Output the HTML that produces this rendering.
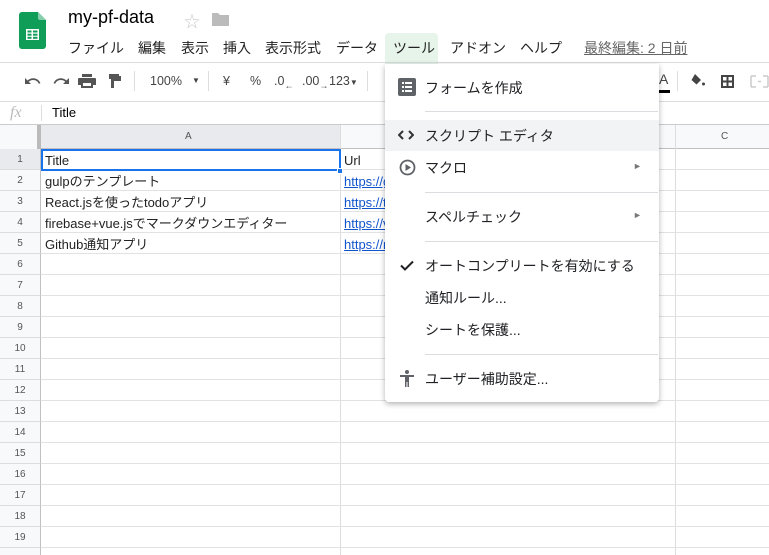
<!DOCTYPE html>
<html><head><meta charset="utf-8"><style>
*{margin:0;padding:0;box-sizing:border-box}
html,body{width:769px;height:555px;overflow:hidden}
body{background:#fff;font-family:"Liberation Sans","Noto Sans CJK JP",sans-serif;position:relative;color:#222}
.a{position:absolute}
.menu span{position:absolute;top:38px;font-size:14px;color:#222;white-space:nowrap}
.tb{position:absolute;font-size:12.5px;color:#444}
.rh{position:absolute;left:0;width:41px;height:21px;background:#f8f9fa;border-bottom:1px solid #ddd;border-right:1px solid #c0c0c0;font-size:10px;color:#555;text-align:center;line-height:21px}
.rl{position:absolute;left:41px;width:728px;height:1px;background:#e2e2e2}
.cell{position:absolute;font-size:13px;line-height:21px;white-space:nowrap;overflow:hidden}
.lnk{color:#1155cc;text-decoration:underline}
.mi{position:absolute;left:425px;font-size:14px;color:#202124;white-space:nowrap}
.sep{position:absolute;left:425px;width:233px;height:1px;background:#dadce0}
</style></head><body>
<svg class="a" style="left:19px;top:12px" width="27" height="37" viewBox="0 0 27 37"><path d="M3 0h16l8 8v26a3 3 0 0 1-3 3H3a3 3 0 0 1-3-3V3a3 3 0 0 1 3-3z" fill="#0f9d58"/><path d="M19 0l8 8h-6a2 2 0 0 1-2-2z" fill="#87ceac"/><rect x="7" y="17" width="13" height="11" fill="#fff"/><g fill="#0f9d58"><rect x="8.5" y="18.5" width="4" height="2"/><rect x="14" y="18.5" width="4.5" height="2"/><rect x="8.5" y="21.7" width="4" height="2"/><rect x="14" y="21.7" width="4.5" height="2"/><rect x="8.5" y="24.8" width="4" height="2"/><rect x="14" y="24.8" width="4.5" height="2"/></g></svg>
<div class="a" style="left:68px;top:7px;font-size:18px;color:#000">my-pf-data</div>
<div class="a" style="left:184px;top:8px;font-size:16px;color:#ccc">☆</div>
<svg class="a" style="left:212px;top:12px" width="17" height="14" viewBox="0 0 17 14"><path d="M0 1h6l2 2h9v11H0z" fill="#bbb"/></svg>
<div class="a" style="left:385px;top:33px;width:53px;height:31px;background:#e6f4ea;border-radius:4px 4px 0 0"></div>
<div class="menu">
<span style="left:68px">ファイル</span><span style="left:138px">編集</span><span style="left:181px">表示</span><span style="left:223px">挿入</span><span style="left:265px">表示形式</span><span style="left:336px">データ</span><span style="left:393px">ツール</span><span style="left:450px">アドオン</span><span style="left:520px">ヘルプ</span><span style="left:584px;color:#666;text-decoration:underline">最終編集: 2 日前</span>
</div>
<div class="a" style="left:0;top:62px;width:769px;height:1px;background:#dadce0"></div>
<svg class="a" style="left:23px;top:74px" width="105" height="14" viewBox="0 0 105 14" fill="#555"><path d="M2 4v6h6l-2.3-2.3C7 6.6 8.6 6 10.3 6c2.6 0 4.7 1.6 5.5 3.8l1.6-.5C16.4 6.4 13.6 4.3 10.3 4.3 8.1 4.3 6.1 5.1 4.6 6.5z"/><path d="M46 4v6h-6l2.3-2.3C41 6.6 39.4 6 37.7 6c-2.6 0-4.7 1.6-5.5 3.8l-1.6-.5C31.6 6.4 34.4 4.3 37.7 4.3c2.2 0 4.2.8 5.7 2.2z"/><path d="M59 0h10v3H59zM56 4h16a1 1 0 0 1 1 1v6h-3v3H58v-3h-3V5a1 1 0 0 1 1-1zm4 5v3h8V9z"/><path d="M86 0h10v5H86zM96 2h2v5h-7v7h-3V5h7z"/></svg>
<div class="a" style="left:134px;top:71px;width:1px;height:20px;background:#ddd"></div>
<div class="tb" style="left:150px;top:74px">100%</div>
<div class="tb" style="left:192px;top:76px;font-size:8px">▼</div>
<div class="a" style="left:208px;top:71px;width:1px;height:20px;background:#ddd"></div>
<div class="tb" style="left:223px;top:74px">¥</div>
<div class="tb" style="left:250px;top:74px">%</div>
<div class="tb" style="left:274px;top:74px">.0<sub style="font-size:9px">←</sub></div>
<div class="tb" style="left:302px;top:74px">.00<sub style="font-size:9px">→</sub></div>
<div class="tb" style="left:329px;top:74px">123<span style="font-size:8px">▼</span></div>
<div class="a" style="left:367px;top:71px;width:1px;height:20px;background:#ddd"></div>
<div class="tb" style="left:659px;top:71px;font-size:14px">A</div>
<div class="a" style="left:658px;top:90px;width:12px;height:3px;background:#000"></div>
<div class="a" style="left:677px;top:71px;width:1px;height:20px;background:#ddd"></div>
<svg class="a" style="left:690px;top:73px" width="16" height="15" viewBox="0 0 16 15" fill="#444"><path d="M5 1l6 6-4.5 4.5L1.5 7z"/><circle cx="13.5" cy="11" r="1.5"/></svg>
<svg class="a" style="left:721px;top:75px" width="13" height="13" viewBox="0 0 13 13"><path d="M1 1h11v11H1zM6.5 1v11M1 6.5h11" stroke="#444" stroke-width="2" fill="none"/></svg>
<svg class="a" style="left:750px;top:75px" width="19" height="13" viewBox="0 0 19 13"><path d="M1 1h5M1 12h5M1 1v11M18 1h-5M18 12h-5M18 1v11M8 6.5h3" stroke="#ccc" stroke-width="1.5" fill="none"/></svg>
<div class="a" style="left:0;top:101px;width:769px;height:1px;background:#dadce0"></div>
<div class="a" style="left:10px;top:104px;font-family:'Liberation Serif',serif;font-style:italic;font-size:16px;color:#bbb">fx</div>
<div class="a" style="left:41px;top:105px;width:1px;height:16px;background:#ddd"></div>
<div class="a" style="left:52px;top:105px;font-size:13px;color:#000">Title</div>
<div class="a" style="left:0;top:124px;width:769px;height:1px;background:#ccc"></div>
<div class="a" style="left:0;top:125px;width:769px;height:24px;background:#f8f9fa;border-bottom:1px solid #c0c0c0"></div>
<div class="a" style="left:41px;top:125px;width:299px;height:24px;background:#e8eaed;border-bottom:1px solid #c0c0c0"></div>
<div class="a" style="left:0;top:125px;width:41px;height:24px;background:#f8f9fa;border-right:4px solid #bbb"></div>
<div class="a" style="left:185px;top:131px;font-size:10px;color:#555">A</div>
<div class="a" style="left:721px;top:131px;font-size:10px;color:#555">C</div>
<div class="a" style="left:340px;top:125px;width:1px;height:430px;background:#ddd"></div>
<div class="a" style="left:675px;top:125px;width:1px;height:430px;background:#ddd"></div>
<div id="rows"></div>
<script>
var h='';for(var i=0;i<19;i++){var t=149+i*21;h+='<div class="rh" style="top:'+t+'px;'+(i==0?'background:#e8eaed;':'')+'">'+(i+1)+'</div><div class="rl" style="top:'+(t+20)+'px"></div>';}
h+='<div class="rh" style="top:548px;height:7px;border-bottom:none"></div>';
document.getElementById('rows').innerHTML=h;
</script>
<div class="cell" style="left:45px;top:150px">Title</div>
<div class="cell" style="left:344px;top:150px">Url</div>
<div class="cell" style="left:45px;top:171px">gulpのテンプレート</div>
<div class="cell" style="left:45px;top:192px">React.jsを使ったtodoアプリ</div>
<div class="cell" style="left:45px;top:213px">firebase+vue.jsでマークダウンエディター</div>
<div class="cell" style="left:45px;top:234px">Github通知アプリ</div>
<div class="cell lnk" style="left:344px;top:171px;width:41px">https://g</div>
<div class="cell lnk" style="left:344px;top:192px;width:41px">https://t</div>
<div class="cell lnk" style="left:344px;top:213px;width:41px">https://v</div>
<div class="cell lnk" style="left:344px;top:234px;width:41px">https://r</div>
<div class="a" style="left:41px;top:149px;width:300px;height:22px;border:2px solid #1a73e8"></div>
<div class="a" style="left:337px;top:168px;width:6px;height:6px;background:#1a73e8;border:1px solid #fff"></div>
<div class="a" style="left:385px;top:64px;width:274px;height:338px;background:#fff;border-radius:0 0 4px 4px;box-shadow:0 2px 6px rgba(0,0,0,.3)"></div>
<svg class="a" style="left:398px;top:78px" width="18" height="18" viewBox="0 0 18 18"><rect width="18" height="18" rx="2" fill="#5f6368"/><g fill="#fff"><rect x="4" y="4" width="2" height="2"/><rect x="7" y="4" width="7" height="2"/><rect x="4" y="8" width="2" height="2"/><rect x="7" y="8" width="7" height="2"/><rect x="4" y="12" width="2" height="2"/><rect x="7" y="12" width="7" height="2"/></g></svg>
<div class="mi" style="top:78px">フォームを作成</div>
<div class="sep" style="top:111px"></div>
<div class="a" style="left:385px;top:120px;width:274px;height:31px;background:#f1f3f4"></div>
<svg class="a" style="left:398px;top:130px" width="16" height="10" viewBox="0 0 16 10"><path d="M5 1L1 5l4 4M11 1l4 4-4 4" stroke="#333" stroke-width="2" fill="none"/></svg>
<div class="mi" style="top:126px">スクリプト エディタ</div>
<svg class="a" style="left:399px;top:159px" width="17" height="17" viewBox="0 0 17 17"><circle cx="8.5" cy="8.5" r="7" stroke="#5f6368" stroke-width="1.8" fill="none"/><path d="M6.5 5v7l5.5-3.5z" fill="#5f6368"/></svg>
<div class="mi" style="top:158px">マクロ</div>
<div class="a" style="left:633px;top:161px;font-size:9px;color:#777">►</div>
<div class="sep" style="top:192px"></div>
<div class="mi" style="top:207px">スペルチェック</div>
<div class="a" style="left:633px;top:210px;font-size:9px;color:#777">►</div>
<div class="sep" style="top:241px"></div>
<svg class="a" style="left:400px;top:260px" width="14" height="11" viewBox="0 0 14 11"><path d="M1 5.5l4 4L13 1.5" stroke="#202124" stroke-width="2" fill="none"/></svg>
<div class="mi" style="top:256px">オートコンプリートを有効にする</div>
<div class="mi" style="top:288px">通知ルール...</div>
<div class="mi" style="top:320px">シートを保護...</div>
<div class="sep" style="top:354px"></div>
<svg class="a" style="left:400px;top:370px" width="14" height="17" viewBox="0 0 14 17" fill="#5f6368"><circle cx="7" cy="2" r="2"/><path d="M0 5h14v2H9v10H7.5v-5h-1v5H5V7H0z"/></svg>
<div class="mi" style="top:369px">ユーザー補助設定...</div>
</body></html>
